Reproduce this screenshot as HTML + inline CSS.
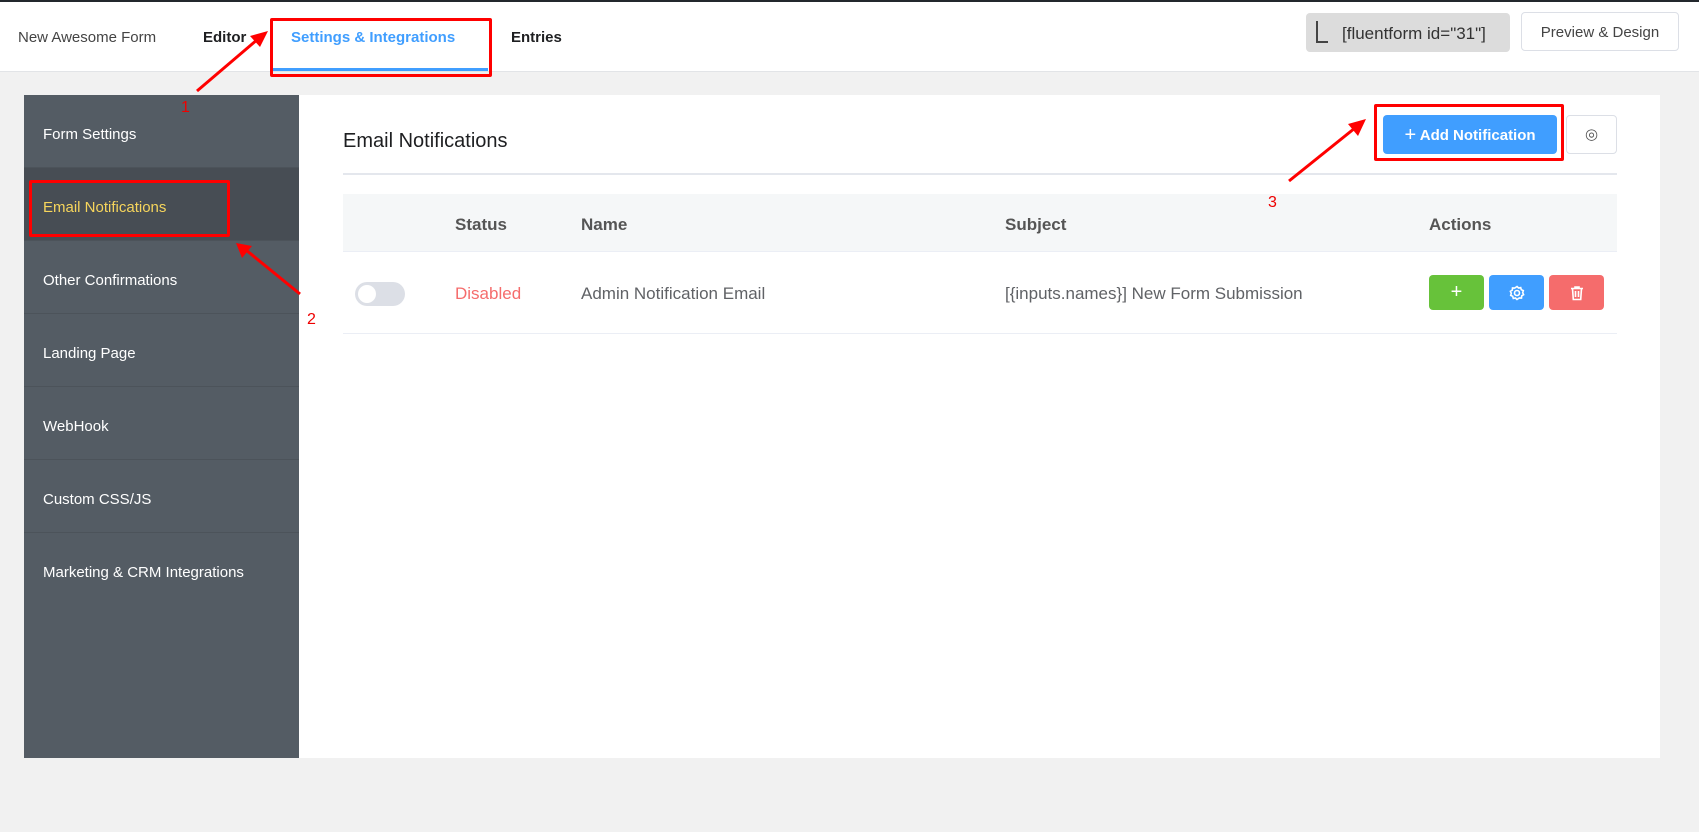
<!DOCTYPE html>
<html><head><meta charset="utf-8"><style>
*{box-sizing:border-box;margin:0;padding:0}
body{width:1699px;height:832px;background:#f1f1f1;font-family:"Liberation Sans",sans-serif;position:relative;overflow:hidden;color:#1e1f21}
.a{position:absolute}
.hdr{left:0;top:0;width:1699px;height:72px;background:#fff;border-top:2px solid #23282d;border-bottom:1px solid #e2e4e7}
.nav{top:29px;font-size:15px}
.side{left:24px;top:95px;width:275px;height:663px;background:#545c64}
.item{position:absolute;left:0;width:275px;height:73px;border-bottom:1px solid #4c535a;color:#fff;font-size:15px;padding-left:19px;line-height:80px}
.main{left:299px;top:95px;width:1361px;height:663px;background:#fff}
.th{font-weight:bold;font-size:17px;color:#555;top:215px}
.td{font-size:17px;color:#606266;top:284px}
.btn{position:absolute;top:275px;width:55px;height:35px;border-radius:4px;color:#fff;text-align:center;line-height:35px;font-size:20px}
.red{border:3px solid #f00;border-radius:2px}
</style></head><body>
<div class="a hdr"></div>
<div class="a nav" style="left:18px;color:#444">New Awesome Form</div>
<div class="a nav" style="left:203px;font-weight:bold">Editor</div>
<div class="a nav" style="left:291px;font-weight:bold;color:#409eff">Settings &amp; Integrations</div>
<div class="a" style="left:273px;top:68px;width:215px;height:3px;background:#409eff"></div>
<div class="a nav" style="left:511px;font-weight:bold">Entries</div>
<div class="a red" style="left:270px;top:18px;width:222px;height:59px"></div>
<div class="a" style="left:1306px;top:13px;width:204px;height:39px;background:#dcdcdc;border-radius:4px;font-size:17px;line-height:41px;padding-left:36px;color:#333">[fluentform id="31"]</div>
<div class="a" style="left:1316px;top:21px;width:12px;height:22px;border-left:2px solid #444;border-bottom:2px solid #444"></div>
<div class="a" style="left:1521px;top:12px;width:158px;height:39px;border:1px solid #dcdfe6;border-radius:4px;background:#fff;font-size:15px;line-height:40px;text-align:center;color:#444">Preview &amp; Design</div>

<div class="a side">
<div class="item" style="top:0">Form Settings</div>
<div class="item" style="top:73px;background:#474d54;color:#f6d55c">Email Notifications</div>
<div class="item" style="top:146px">Other Confirmations</div>
<div class="item" style="top:219px">Landing Page</div>
<div class="item" style="top:292px">WebHook</div>
<div class="item" style="top:365px">Custom CSS/JS</div>
<div class="item" style="top:438px;border:none">Marketing &amp; CRM Integrations</div>
</div>
<div class="a red" style="left:29px;top:180px;width:201px;height:57px"></div>

<div class="a main"></div>
<div class="a" style="left:343px;top:130px;font-size:20px;color:#1e1f21">Email Notifications</div>
<div class="a" style="left:343px;top:173px;width:1274px;height:2px;background:#e4e7ed"></div>
<div class="a" style="left:1383px;top:115px;width:174px;height:39px;background:#409eff;border-radius:4px;color:#fff;font-weight:bold;font-size:15px;line-height:40px;text-align:center"><span style="font-weight:normal;font-size:20px;vertical-align:-1px">+</span> Add Notification</div>
<div class="a red" style="left:1374px;top:104px;width:190px;height:57px"></div>
<div class="a" style="left:1566px;top:115px;width:51px;height:39px;border:1px solid #dcdfe6;border-radius:4px;text-align:center;line-height:38px;font-size:15px;color:#555">◎</div>
<div class="a" style="left:343px;top:194px;width:1274px;height:58px;background:#f5f7f8;border-bottom:1px solid #ebeef5"></div>
<div class="a th" style="left:455px">Status</div>
<div class="a th" style="left:581px">Name</div>
<div class="a th" style="left:1005px">Subject</div>
<div class="a th" style="left:1429px">Actions</div>
<div class="a" style="left:343px;top:333px;width:1274px;height:1px;background:#ebeef5"></div>
<div class="a" style="left:355px;top:282px;width:50px;height:24px;background:#dcdfe6;border-radius:12px"></div>
<div class="a" style="left:358px;top:285px;width:18px;height:18px;background:#fff;border-radius:50%"></div>
<div class="a td" style="left:455px;color:#f56c6c">Disabled</div>
<div class="a td" style="left:581px">Admin Notification Email</div>
<div class="a td" style="left:1005px">[{inputs.names}] New Form Submission</div>
<div class="btn" style="left:1429px;background:#67c23a">+</div>
<div class="btn" style="left:1489px;background:#409eff"><svg width="16" height="16" viewBox="0 0 16 16" style="margin-top:10px" fill="none" stroke="#fff" stroke-width="1.6"><circle cx="8" cy="8" r="2.5"/><path d="M8 1.5l1.6 1.5 2.1-.4.6 2.1 2 .9-.6 2.1.9 2-1.9 1.1-.2 2.2-2.2-.1L8 14.5l-1.6-1.5-2.1.4-.6-2.1-2-.9.6-2.1-.9-2 1.9-1.1.2-2.2 2.2.1z"/></svg></div>
<div class="btn" style="left:1549px;background:#f56c6c"><svg width="16" height="16" viewBox="0 0 16 16" style="margin-top:10px" fill="none" stroke="#fff" stroke-width="1.6"><path d="M2 3.5h12M6 3.5V2h4v1.5M3.5 3.5l.8 11h7.4l.8-11M6.5 6v6M9.5 6v6"/></svg></div>

<svg class="a" style="left:0;top:0" width="1699" height="832">
<g stroke="#f00" stroke-width="3" fill="#f00">
<line x1="197" y1="91" x2="258" y2="39"/><polygon points="268,31 250,36 260,47" stroke="none"/>
<line x1="300" y1="294" x2="246" y2="250"/><polygon points="236,243 242,258 252,246" stroke="none"/>
<line x1="1289" y1="181" x2="1355" y2="128"/><polygon points="1366,119 1348,124 1358,136" stroke="none"/>
</g>
<text x="181" y="112" fill="#e00" font-size="16" font-family="Liberation Sans">1</text>
<text x="307" y="324" fill="#e00" font-size="16" font-family="Liberation Sans">2</text>
<text x="1268" y="207" fill="#e00" font-size="16" font-family="Liberation Sans">3</text>
</svg>
</body></html>
